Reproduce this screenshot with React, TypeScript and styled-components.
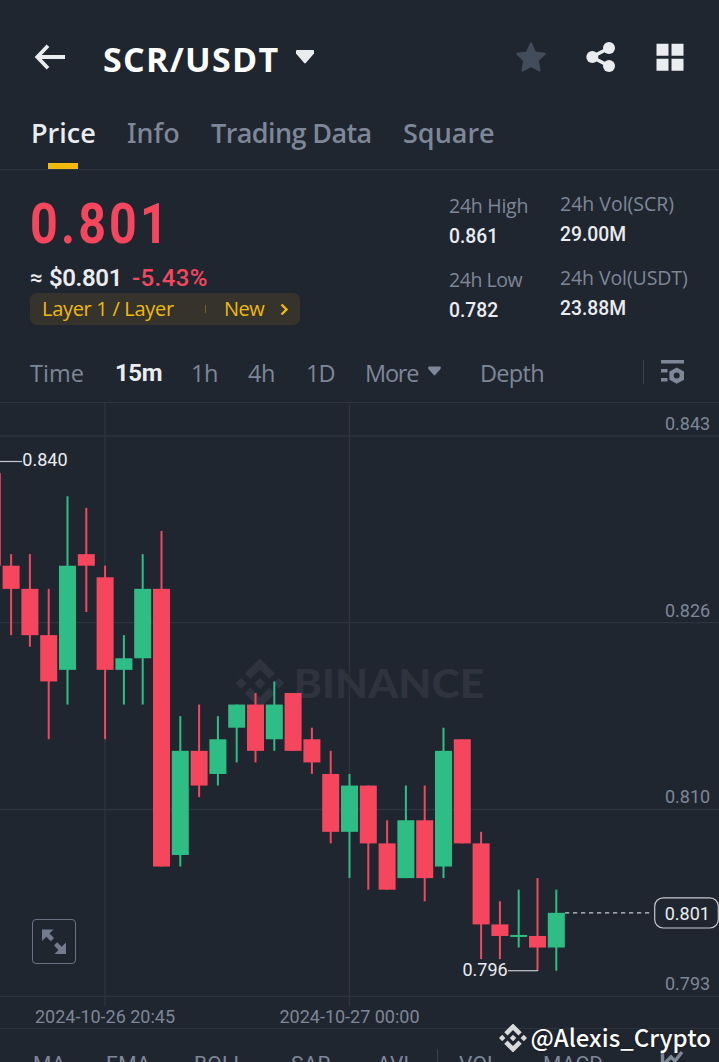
import React from 'react';
import styled, { createGlobalStyle } from 'styled-components';

const color = {
  bg: '#202630',
  text: '#eaecef',
  muted: '#7e8797',
  line: '#2e343f',
  red: '#f6465d',
  green: '#2ebd85',
  yellow: '#f0b90b',
};

const ui = `"Open Sans", "Noto Sans", sans-serif`;
const num = `Roboto, "Liberation Sans", sans-serif`;

const GlobalStyle = createGlobalStyle`
  * { box-sizing: border-box; }
  html, body { margin: 0; background: ${color.bg}; overflow: hidden; }
`;

const Screen = styled.main`
  position: relative;
  display: flex;
  flex-direction: column;
  width: 719px;
  height: 1062px;
  overflow: hidden;
  background: ${color.bg};
  color: ${color.text};
  font-family: ${ui};
  white-space: nowrap;

  > * { flex-shrink: 0; }
`;

const Header = styled.header`
  display: flex;
  align-items: center;
  height: 114px;
  padding: 0 33px 0 34px;
`;

const BackIcon = styled.svg`
  width: 32px;
  height: 28px;
  margin-right: 37px;
`;

const Pair = styled.h1`
  width: 192px;
  margin: 3px 0 0;
  font: 700 34px/44px ${ui};
  letter-spacing: 1.3px;
  color: #fff;
`;

const Caret = styled.svg<{ $w: number; $h: number }>`
  flex: none;
  width: ${(p) => p.$w}px;
  height: ${(p) => p.$h}px;
`;

const Actions = styled.div`
  display: flex;
  align-items: center;
  gap: 37.5px;
  margin-left: auto;
`;

const ActionIcon = styled.svg`
  width: 32px;
  height: 32px;
`;

const Tabs = styled.nav`
  display: flex;
  height: 56px;
  padding-left: 31px;
  border-bottom: 1px solid ${color.line};
`;

const Tab = styled.div<{ $w: number; $active?: boolean; $ls?: number; $serifI?: boolean }>`
  display: flex;
  flex-direction: column;
  justify-content: space-between;
  flex: 0 0 ${(p) => p.$w}px;
  font: ${(p) => (p.$serifI ? `500 27px/38px "Noto Sans", sans-serif` : `600 27px/38px ${ui}`)};
  letter-spacing: ${(p) => p.$ls ?? 0}px;
  color: ${(p) => (p.$active ? color.text : color.muted)};
`;

const Underline = styled.i`
  width: 30px;
  height: 6px;
  margin-left: 17px;
  background: ${color.yellow};
`;

const Summary = styled.section`
  display: flex;
  height: 173px;
  padding-left: 30px;
`;

const PriceColumn = styled.div`
  display: flex;
  flex-direction: column;
  width: 419px;
  padding-top: 22px;
`;

const LastPrice = styled.div`
  font: 700 55px/64px ${num};
  letter-spacing: 3.6px;
  transform: scaleX(0.88);
  transform-origin: 0 50%;
  color: ${color.red};
`;

const FiatRow = styled.div`
  display: flex;
  align-items: center;
  height: 37px;
  padding-top: 7px;
  font: 600 24px/30px ${num};
`;

const Approx = styled.span`
  width: 19px;
  font-size: 22px;
`;

const Fiat = styled.span`
  width: 83px;
  letter-spacing: -0.4px;
`;

const Change = styled.span`
  font-weight: 500;
  letter-spacing: 0.4px;
  color: ${color.red};
`;

const Tag = styled.div`
  display: flex;
  align-items: center;
  width: 270px;
  height: 32px;
  padding-left: 12px;
  border-radius: 7px;
  background: #35332c;
  color: ${color.yellow};
  font: 400 20px/30px ${ui};
`;

const TagText = styled.span<{ $w: number; $ls?: number }>`
  width: ${(p) => p.$w}px;
  letter-spacing: ${(p) => p.$ls ?? 0}px;
`;

const TagDivider = styled.i`
  width: 1px;
  height: 8px;
  margin-right: 18px;
  background: #75601e;
`;

const StatColumn = styled.dl<{ $w: number; $top: number }>`
  width: ${(p) => p.$w}px;
  margin: ${(p) => p.$top}px 0 0;
`;

const StatLabel = styled.dt<{ $ls?: number }>`
  font: 400 19.5px/28px ${ui};
  letter-spacing: ${(p) => p.$ls ?? 0}px;
  color: ${color.muted};
`;

const StatValue = styled.dd`
  height: 46px;
  margin: 0;
  font: 500 19.3px/34px ${num};
`;

const Intervals = styled.nav`
  display: flex;
  align-items: center;
  height: 60px;
  padding: 0 34px 0 30px;
  border-bottom: 1px solid ${color.line};
`;

const Interval = styled.span<{ $w: number; $active?: boolean; $ls?: number }>`
  flex: 0 0 ${(p) => p.$w}px;
  font: ${(p) => (p.$active ? `700 24px/34px ${num}` : `400 23.5px/34px ${ui}`)};
  letter-spacing: ${(p) => p.$ls ?? 0}px;
  color: ${(p) => (p.$active ? color.text : color.muted)};
`;

const Tools = styled.div`
  display: flex;
  align-items: center;
  height: 24px;
  margin: -2px 0 0 auto;
  border-left: 1px solid #3a414d;
  padding-left: 16px;
`;

const MoreCaret = styled.svg`
  flex: none;
  width: 13px;
  height: 11px;
  margin: -2px 39px 0 0;
`;

const ChartArea = styled.section`
  position: relative;
  height: 626px;
  border-bottom: 1px solid ${color.line};
`;

const ChartSvg = styled.svg`
  display: block;
  width: 719px;
  height: 625px;
  font-family: ${num};
`;

const ExpandButton = styled.button`
  position: absolute;
  left: 32px;
  top: 516px;
  width: 44px;
  height: 45px;
  padding: 0;
  border: 1px solid #697283;
  border-radius: 4px;
  background: transparent;
`;

const Indicators = styled.nav`
  display: flex;
  padding: 20px 0 0 33px;
  font: 400 21px/30px ${num};
  color: ${color.muted};
`;

const Indicator = styled.span<{ $w: number }>`
  flex: 0 0 ${(p) => p.$w}px;
  letter-spacing: 0.2px;
`;

const IndicatorDivider = styled.i`
  flex: none;
  width: 1px;
  height: 24px;
  margin-right: 21px;
  background: #3a414d;
`;

const Handle = styled.div`
  position: absolute;
  right: 8px;
  top: 1020px;
  display: flex;
  align-items: center;
  gap: 3px;
  height: 36px;
  font: 500 24px/34px "Noto Sans CJK SC", "Noto Sans", sans-serif;
  color: #fff;
  text-shadow: 0 0 2px rgba(0, 0, 0, 0.7);
`;

const HandleName = styled.span`
  padding-bottom: 2px;
`;

/* Price levels are counted down from 0.837 in steps of 0.001. */
type Candle = [up: 0 | 1, high: number, top: number, bottom: number, low: number];

const candles: Candle[] = [
  [0, -2, -2, 6, 6],
  [0, 5, 6, 8, 12],
  [0, 5, 8, 12, 13],
  [0, 8, 12, 16, 21],
  [1, 0, 6, 15, 18],
  [0, 1, 5, 6, 10],
  [0, 6, 7, 15, 21],
  [1, 12, 14, 15, 18],
  [1, 5, 8, 14, 18],
  [0, 3, 8, 32, 32],
  [1, 19, 22, 31, 32],
  [0, 18, 22, 25, 26],
  [1, 19, 21, 24, 25],
  [1, 18, 18, 20, 23],
  [0, 17, 18, 22, 23],
  [1, 16, 18, 21, 22],
  [0, 17, 17, 22, 22],
  [0, 20, 21, 23, 24],
  [0, 22, 24, 29, 30],
  [1, 24, 25, 29, 33],
  [0, 25, 25, 30, 34],
  [0, 28, 30, 34, 34],
  [1, 25, 28, 33, 33],
  [0, 25, 28, 33, 35],
  [1, 20, 22, 32, 33],
  [0, 21, 21, 30, 30],
  [0, 29, 30, 37, 40],
  [0, 35, 37, 38, 40],
  [1, 34, 38, 38, 39],
  [0, 33, 38, 39, 41],
  [1, 34, 36, 39, 41],
];

const yOf = (k: number) => 93.3 + 11.57 * k;
const xOf = (i: number) => -7.7 + 18.8 * i;

const BinanceMark = ({ fill }: { fill: string }) => (
  <g fill={fill}>
    <path d="M7.3 9.9 12 5.2l4.7 4.7 2.8-2.8L12 -.4 4.5 7.1z" />
    <path d="M7.3 14.1 12 18.8l4.7-4.7 2.8 2.8L12 24.4 4.5 16.9z" />
    <path d="M0 12l2.75-2.75L5.5 12l-2.75 2.75z" />
    <path d="M18.5 12l2.75-2.75L24 12l-2.75 2.75z" />
    <path d="M9.2 12 12 9.2l2.8 2.8-2.8 2.8z" />
  </g>
);

const Chart = () => (
  <ChartSvg viewBox="0 0 719 625">
    <g stroke={color.line} strokeWidth="1.3">
      {[32.8, 219.7, 406.5, 593.3].map((y) => (
        <path key={y} d={`M0 ${y}H719`} />
      ))}
      <path d="M105 0V603" />
      <path d="M349.5 0V603" />
    </g>
    <g opacity="0.95">
      <g transform="translate(235.5 256) scale(2.03)">
        <BinanceMark fill="#2f343f" />
      </g>
      <text x="293.5" y="294.5" fontFamily='Lato, "Open Sans", sans-serif' fontWeight="900" fontSize="39.5" fill="#2f343f" textLength="191" lengthAdjust="spacingAndGlyphs">
        BINANCE
      </text>
    </g>
    {candles.map(([up, high, top, bottom, low], i) => (
      <g key={i} fill={up ? color.green : color.red}>
        <rect x={xOf(i) - 1} y={yOf(high)} width="2" height={yOf(low) - yOf(high)} />
        {top === bottom ? (
          <rect x={xOf(i) - 8.5} y={yOf(top) - 1} width="17" height="2" />
        ) : (
          <rect x={xOf(i) - 8.5} y={yOf(top)} width="17" height={yOf(bottom) - yOf(top)} />
        )}
      </g>
    ))}
    <g stroke="#c5c8ce" strokeWidth="1.2">
      <path d="M0 58.5H22" />
      <path d="M508 567.7H538" />
      <path d="M565 509.9H650" strokeDasharray="4.2 3.8" strokeWidth="1.3" />
    </g>
    <g fill={color.text} fontSize="18">
      <text x="22.3" y="63">0.840</text>
      <text x="462.5" y="573">0.796</text>
    </g>
    <g fill={color.muted} fontSize="18">
      <text x="665" y="27">0.843</text>
      <text x="665" y="214">0.826</text>
      <text x="665" y="400">0.810</text>
      <text x="665" y="587">0.793</text>
      <text x="35" y="620" textLength="140">2024-10-26 20:45</text>
      <text x="279.5" y="620" textLength="140">2024-10-27 00:00</text>
    </g>
    <rect x="654.7" y="494.8" width="63.6" height="30.2" rx="8.5" fill={color.bg} stroke="#c5c8ce" strokeWidth="1.2" />
    <text x="664.7" y="517" fontSize="18" fill={color.text}>0.801</text>
  </ChartSvg>
);

export default function App() {
  return (
    <Screen>
      <GlobalStyle />
      <Header>
        <BackIcon viewBox="0 0 32 28" fill="none" stroke={color.text} strokeWidth="3.8">
          <path d="M31 14H4M14 2.8 3.3 14 14 25.2" />
        </BackIcon>
        <Pair>SCR/USDT</Pair>
        <Caret $w={20} $h={16} viewBox="0 0 20 16">
          <path d="M2 1h16q1 0 1 1v2.5L10.8 14q-.8.9-1.6 0L1 4.5V2q0-1 1-1z" fill={color.text} />
        </Caret>
        <Actions>
          <ActionIcon viewBox="0 0 32 32">
            <path d="m16 2.4 4.2 9.2 9.6 1.2-7 6.8 1.8 10-8.6-4.6-8.6 4.6 1.8-10-7-6.8 9.6-1.2z" fill="#434c5a" stroke="#434c5a" strokeWidth="2" strokeLinejoin="round" />
          </ActionIcon>
          <ActionIcon viewBox="0 0 32 32" fill={color.text}>
            <path d="M24 7 7 16l17 9" fill="none" stroke={color.text} strokeWidth="3.6" />
            <circle cx="24" cy="7" r="6" />
            <circle cx="7.3" cy="16" r="6" />
            <circle cx="24" cy="25" r="6" />
          </ActionIcon>
          <ActionIcon viewBox="0 0 32 32" fill={color.text}>
            <path d="M2.5 2.7h12v12h-12zM17.5 2.7h12v12h-12zM2.5 17.7h12v12h-12zM17.5 17.7h12v12h-12z" />
          </ActionIcon>
        </Actions>
      </Header>

      <Tabs>
        <Tab $w={96} $active>
          Price
          <Underline />
        </Tab>
        <Tab $w={84} $serifI>Info</Tab>
        <Tab $w={192} $ls={-0.6}>Trading Data</Tab>
        <Tab $w={100}>Square</Tab>
      </Tabs>

      <Summary>
        <PriceColumn>
          <LastPrice>0.801</LastPrice>
          <FiatRow>
            <Approx>≈</Approx>
            <Fiat>$0.801</Fiat>
            <Change>-5.43%</Change>
          </FiatRow>
          <Tag>
            <TagText $w={163} $ls={-0.3}>Layer 1 / Layer</TagText>
            <TagDivider />
            <TagText $w={56} $ls={-0.5}>New</TagText>
            <Caret $w={9} $h={13} viewBox="0 0 9 13">
              <path d="M1.5 1.5 6.5 6.5 1.5 11.5" fill="none" stroke={color.yellow} strokeWidth="2.4" />
            </Caret>
          </Tag>
        </PriceColumn>
        <StatColumn $w={111} $top={22}>
          <StatLabel $ls={-0.25}>24h High</StatLabel>
          <StatValue>0.861</StatValue>
          <StatLabel $ls={-0.45}>24h Low</StatLabel>
          <StatValue>0.782</StatValue>
        </StatColumn>
        <StatColumn $w={140} $top={20}>
          <StatLabel>24h Vol(SCR)</StatLabel>
          <StatValue>29.00M</StatValue>
          <StatLabel $ls={-0.1}>24h Vol(USDT)</StatLabel>
          <StatValue>23.88M</StatValue>
        </StatColumn>
      </Summary>

      <Intervals>
        <Interval $w={85}>Time</Interval>
        <Interval $w={76} $active $ls={-0.4}>15m</Interval>
        <Interval $w={57} $ls={-0.5}>1h</Interval>
        <Interval $w={58} $ls={-0.5}>4h</Interval>
        <Interval $w={59} $ls={-1}>1D</Interval>
        <Interval $w={63} $ls={-1.2}>More</Interval>
        <MoreCaret viewBox="0 0 13 11">
          <path d="M1 .5h11q.7 0 .7.8v1.5L7.2 9.1q-.7.7-1.4 0L.3 3V1.3Q.3.5 1 .5z" fill={color.muted} />
        </MoreCaret>
        <Interval $w={70} $ls={-0.7}>Depth</Interval>
        <Tools>
          <Caret $w={25} $h={25} viewBox="0 0 25 25" fill={color.muted}>
            <path d="M1 1h23v3.6H1zM1 10h6.5v3.4H1zM1 19h6.5v3.4H1z" />
            <path fillRule="evenodd" d="m16.7 8.6 7.3 4v8.2l-7.3 4-7.3-4v-8.2zM16.7 13.6a3 3 0 1 0 0 6 3 3 0 0 0 0-6z" />
          </Caret>
        </Tools>
      </Intervals>

      <ChartArea>
        <Chart />
        <ExpandButton aria-label="Expand chart">
          <svg width="42" height="43" viewBox="0 0 42 43" fill="#737c8c">
            <path d="M9 9.5h11.5l-4 4 4.5 4.5-3.2 3.2-4.5-4.5L9 21z" />
            <path d="M33 34H21.5l4-4-4.5-4.5 3.2-3.2 4.5 4.5L33 22.5z" />
          </svg>
        </ExpandButton>
      </ChartArea>

      <Indicators>
        <Indicator $w={73}>MA</Indicator>
        <Indicator $w={88}>EMA</Indicator>
        <Indicator $w={97}>BOLL</Indicator>
        <Indicator $w={86}>SAR</Indicator>
        <Indicator $w={60}>AVL</Indicator>
        <IndicatorDivider />
        <Indicator $w={84}>VOL</Indicator>
        <Indicator $w={117}>MACD</Indicator>
        <Caret $w={24} $h={24} viewBox="0 0 24 24" fill="none" stroke={color.muted} strokeWidth="3.4">
          <path d="M2.5 1v20H22M5 14l6-6 4 4 7-9" />
        </Caret>
      </Indicators>

      <Handle>
        <svg width="28" height="28" viewBox="0 0 24 24">
          <BinanceMark fill="#d9dadc" />
        </svg>
        <HandleName>@Alexis_Crypto</HandleName>
      </Handle>
    </Screen>
  );
}
